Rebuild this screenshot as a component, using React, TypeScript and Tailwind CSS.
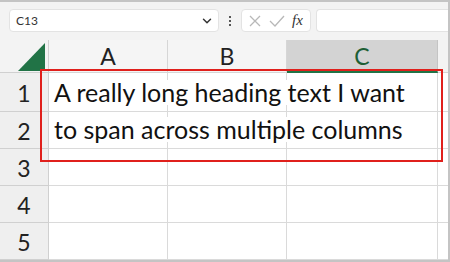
import { ChevronDown } from "lucide-react";

const cols = ["A", "B", "C"];
const rows = [1, 2, 3, 4, 5];

const font = { fontFamily: "Lato, 'Open Sans', sans-serif" };

function Cell({ row, col }: { row: number; col: number }) {
  const text =
    col === 0 && row === 1
      ? "A really long heading text I want"
      : col === 0 && row === 2
      ? "to span across multiple columns"
      : "";
  return (
    <div
      className={
        text
          ? "relative z-10 border-r border-b border-[#dadada] bg-white"
          : "border-r border-b border-[#dadada] bg-white"
      }
    >
      {text && (
        <span className="absolute left-[5px] bottom-[6px] whitespace-nowrap bg-white text-[25px] leading-none text-[#111]">
          {text}
        </span>
      )}
    </div>
  );
}

export default function App() {
  return (
    <div
      className="relative flex h-[262px] w-[450px] flex-col overflow-hidden border-t-2 border-r-2 border-b-2 border-[#c4c4c4] bg-[#f3f3f3]"
      style={font}
    >
      {/* formula bar */}
      <div className="flex h-[38px] items-start gap-0 pt-[7px] pl-[9px]">
        <div className="flex h-[23px] w-[210px] items-center justify-between rounded-[4px] border border-[#e3e3e3] bg-white pl-[6px] pr-[4px] text-[12px] text-[#333]">
          <span>C13</span>
          <ChevronDown className="h-[14px] w-[14px] text-[#333]" strokeWidth={2.5} />
        </div>
        <div className="flex h-[23px] w-[22px] items-center justify-center">
          <div className="flex flex-col gap-[2px]">
            <span className="h-[2px] w-[2px] bg-[#555]" />
            <span className="h-[2px] w-[2px] bg-[#555]" />
            <span className="h-[2px] w-[2px] bg-[#555]" />
          </div>
        </div>
        <div className="flex h-[23px] w-[70px] items-center gap-[7px] rounded-[4px] border border-[#e3e3e3] bg-white pl-[6px]">
          <svg width="14" height="14" viewBox="0 0 14 14" fill="none" stroke="#b8b8b8" strokeWidth="1.3">
            <path d="M2 2 L12 12 M12 2 L2 12" />
          </svg>
          <svg width="16" height="14" viewBox="0 0 16 14" fill="none" stroke="#b8b8b8" strokeWidth="1.3">
            <path d="M1 7 L6 12 L15 2" />
          </svg>
          <span
            className="text-[15px] italic text-[#333]"
            style={{ fontFamily: "'Liberation Serif', serif" }}
          >
            fx
          </span>
        </div>
        <div className="ml-[5px] h-[23px] flex-1 rounded-l-[4px] border border-r-0 border-[#e3e3e3] bg-white" />
      </div>

      {/* grid */}
      <div className="grid flex-1 grid-cols-[49px_119px_119px_151px_1fr] grid-rows-[33px_39px_37px_37px_37px_37px]">
        <div className="relative border-r border-b border-[#d0d0d0] bg-[#f3f3f3]">
          <svg className="absolute left-[18px] top-[3px]" width="28" height="28" viewBox="0 0 28 28">
            <path d="M0 28 L27 0 L27 28 Z" fill="#217346" />
          </svg>
        </div>
        {cols.map((c) => (
          <div
            key={c}
            className={
              c === "C"
                ? "flex items-center justify-center border-r border-b-[3px] border-r-[#c4c4c4] border-b-[#217346] bg-[#d3d3d3] pt-[2px] text-[23px] text-[#1d5f35]"
                : "flex items-center justify-center border-r border-b border-[#d6d6d6] bg-[#f5f5f5] text-[23px] text-[#222]"
            }
          >
            {c}
          </div>
        ))}
        <div className="border-b border-[#d6d6d6] bg-[#f3f3f3]" />
        {rows.map((r) => (
          <div key={r} className="contents">
            <div className="flex items-center justify-center border-r border-b border-[#d0d0d0] bg-[#efefef] pt-[2px] text-[23px] text-[#222]">
              {r}
            </div>
            {cols.map((c, i) => (
              <Cell key={c} row={r} col={i} />
            ))}
            <div className="border-b border-[#dadada] bg-white" />
          </div>
        ))}
      </div>

      {/* selection outline */}
      <div className="pointer-events-none absolute z-20 left-[40px] top-[67px] h-[93px] w-[403px] border-2 border-[#e0201c]" />
    </div>
  );
}
